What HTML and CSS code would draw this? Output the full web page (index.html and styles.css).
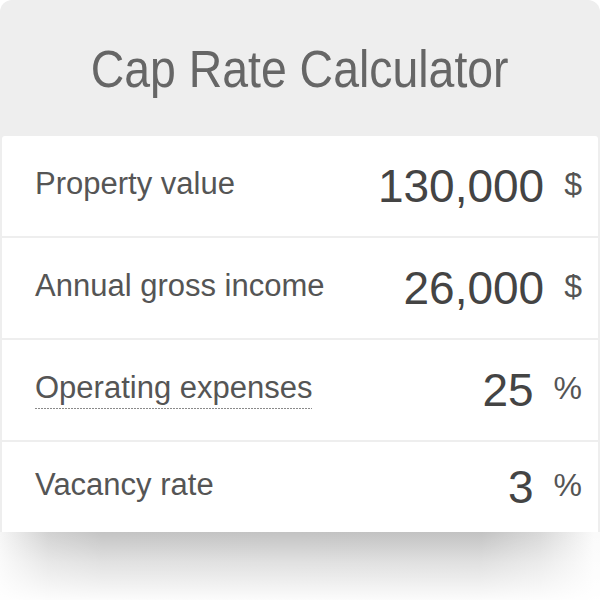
FILE: index.html
```html
<!DOCTYPE html>
<html>
<head>
<meta charset="utf-8">
<link rel="stylesheet" href="styles.css">
</head>
<body>
<div class="widget">
  <div class="header"><h1 class="title">Cap Rate Calculator</h1></div>
  <div class="card">
    <div class="row">
      <span class="label">Property value</span>
      <span class="value">130,000</span>
      <span class="unit">$</span>
    </div>
    <div class="row">
      <span class="label">Annual gross income</span>
      <span class="value">26,000</span>
      <span class="unit">$</span>
    </div>
    <div class="row">
      <span class="label"><span class="term">Operating expenses</span></span>
      <span class="value">25</span>
      <span class="unit">%</span>
    </div>
    <div class="row row-last">
      <span class="label">Vacancy rate</span>
      <span class="value">3</span>
      <span class="unit">%</span>
    </div>
  </div>
</div>
<div class="shadow"></div>
</body>
</html>
```
FILE: styles.css
```css
html, body {
  margin: 0;
  padding: 0;
  background: #fff;
}
body {
  width: 600px;
  height: 600px;
  overflow: hidden;
  font-family: "Liberation Sans", Arial, sans-serif;
}
.widget {
  background: #eeeeee;
  border-radius: 12px 12px 0 0;
  padding: 0 2px;
}
.header {
  height: 136px;
  display: flex;
  align-items: center;
  justify-content: center;
}
.title {
  display: inline-block;
  margin: 3px 0 0 0;
  font-family: "Liberation Sans", Arial, sans-serif;
  font-weight: normal;
  font-size: 51px;
  color: #666;
  white-space: nowrap;
  transform: scaleX(0.91);
}
.card {
  display: flex;
  flex-direction: column;
  gap: 2px;
}
.row {
  height: 100px;
  background: #fff;
  display: flex;
  align-items: center;
  padding: 0 16px 0 33px;
}
.row:first-child {
  border-radius: 3px 3px 0 0;
}
.row-last {
  height: 90px;
}
.label {
  flex: 1;
  font-size: 31px;
  color: #555;
  margin-bottom: 5px;
}
.term {
  padding-bottom: 4px;
  background-image: linear-gradient(to right, #8a8a8a 2px, transparent 2px);
  background-size: 3px 1px;
  background-repeat: repeat-x;
  background-position: left bottom;
}
.value {
  font-size: 46px;
  color: #444;
}
.unit {
  font-size: 32px;
  color: #555;
  margin-left: 20px;
  margin-bottom: 3px;
}
.shadow {
  height: 68px;
  background:
    linear-gradient(to bottom, rgba(255,255,255,0) 0%, rgba(255,255,255,0.5) 45%, rgba(255,255,255,0.95) 100%),
    linear-gradient(to right, #f6f6f6 0%, #d2d2d2 8%, #c4c4c4 17%, #c2c2c2 80%, #d8d8d8 90%, #fafafa 99%);
}
```
